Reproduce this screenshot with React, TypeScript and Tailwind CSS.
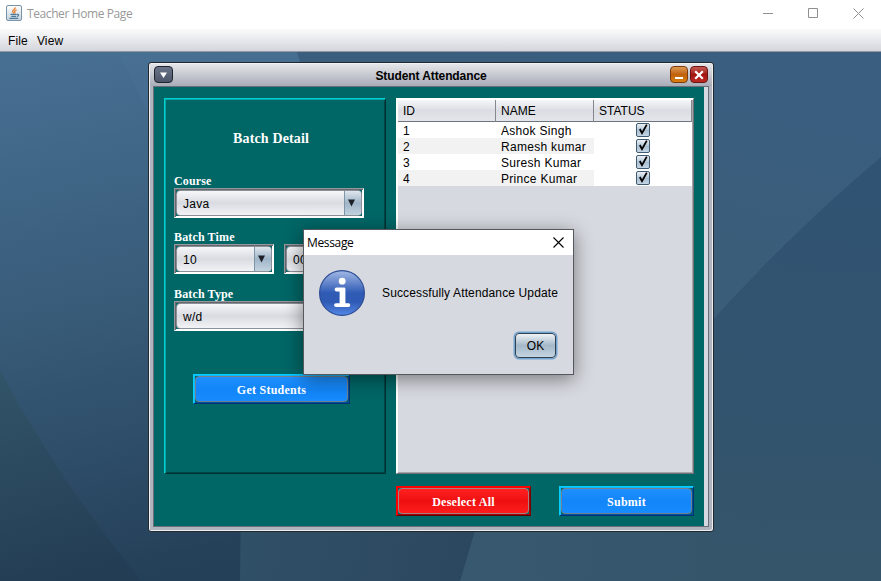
import React from 'react';
import clsx from 'clsx';

interface Student {
  id: number;
  name: string;
}

const students: Student[] = [
  { id: 1, name: 'Ashok Singh' },
  { id: 2, name: 'Ramesh kumar' },
  { id: 3, name: 'Suresh Kumar' },
  { id: 4, name: 'Prince Kumar' },
];

const JavaIcon: React.FC = () => (
  <svg width="16" height="16" viewBox="0 0 16 16" className="shrink-0">
    <defs>
      <linearGradient id="cup" x1="0" y1="0" x2="0" y2="1">
        <stop offset="0" stopColor="#ffffff" />
        <stop offset="1" stopColor="#c3d3de" />
      </linearGradient>
    </defs>
    <rect x="0.5" y="0.5" width="15" height="15" rx="1.5" fill="url(#cup)" stroke="#7893a8" />
    <path d="M9.4 2.4C9.8 4.2 6.2 4.8 6.6 6.5c.2.8 1.2 1 1 2M10.6 4.8C8.8 5.6 8.2 6.2 8.8 7c.4.6.1 1-.2 1.4" fill="none" stroke="#e8812e" strokeWidth="1.3" />
    <path d="M4.4 9.4h6.2M5.2 11.4h5M3.4 13.4h8.8M11 9.5c2.2-.6 2.2 1.4 0 1.9" fill="none" stroke="#4d7796" strokeWidth="1.1" />
  </svg>
);

const Wallpaper: React.FC = () => (
  <svg className="absolute inset-0" width="881" height="529" viewBox="0 52 881 529">
    <defs>
      <linearGradient id="left" gradientUnits="userSpaceOnUse" x1="60" y1="60" x2="170" y2="575">
        <stop offset="0" stopColor="#476f92" />
        <stop offset="0.5" stopColor="#375a77" />
        <stop offset="1" stopColor="#243f58" />
      </linearGradient>
      <linearGradient id="corner" gradientUnits="userSpaceOnUse" x1="0" y1="375" x2="60" y2="581">
        <stop offset="0" stopColor="#325468" />
        <stop offset="1" stopColor="#233d54" />
      </linearGradient>
      <linearGradient id="right" gradientUnits="userSpaceOnUse" x1="760" y1="52" x2="700" y2="320">
        <stop offset="0" stopColor="#3a5e80" />
        <stop offset="1" stopColor="#3a5d78" />
      </linearGradient>
      <linearGradient id="rightLow" gradientUnits="userSpaceOnUse" x1="800" y1="180" x2="780" y2="581">
        <stop offset="0" stopColor="#305373" />
        <stop offset="1" stopColor="#35556a" />
      </linearGradient>
      <linearGradient id="mid" gradientUnits="userSpaceOnUse" x1="240" y1="531" x2="480" y2="581">
        <stop offset="0" stopColor="#305067" />
        <stop offset="1" stopColor="#2b475f" />
      </linearGradient>
      <linearGradient id="bottom" gradientUnits="userSpaceOnUse" x1="470" y1="0" x2="720" y2="0">
        <stop offset="0" stopColor="#38586f" />
        <stop offset="1" stopColor="#35556b" />
      </linearGradient>
    </defs>
    <path d="M0 52H881V581H0Z" fill="url(#left)" />
    <path d="M118 52H300L320 120H152Z" fill="#4a7396" opacity="0.4" />
    <path d="M0 370Q58 480 142 581H0Z" fill="url(#corner)" />
    <path d="M297 52H881V400H400Z" fill="url(#right)" />
    <path d="M881 157Q785 238 700 334L460 581H881Z" fill="url(#rightLow)" />
    <path d="M241 500H484L460 581H240Z" fill="url(#mid)" />
    <path d="M484 500H712V581H460Z" fill="url(#bottom)" />
  </svg>
);

const Combo: React.FC<{ value: string; className: string }> = ({ value, className }) => (
  <div
    className={clsx(
      'h-[30px] border border-t-[#97989d] border-l-[#97989d] border-r-white border-b-white bg-[#006666] p-px shadow-[inset_1px_1px_0_#66676c,inset_-1px_-1px_0_#fff]',
      className,
    )}
  >
    <div className="flex h-[26px] overflow-hidden rounded-[4px] border border-[#8b8f98] bg-linear-to-b from-[#f6f7f9] via-[#d8dbe1] to-[#f2f3f6]">
      <span className="flex-1 pt-px pl-[6px] text-[12px] leading-[25px] tracking-[0.3px]">{value}</span>
      <span className="flex w-[17px] border-l border-[#7f95a8] bg-linear-to-b from-[#dfe6ed] via-[#9fb5c8] to-[#c3d3e0] pt-[8px] pl-[3px]">
        <svg width="7" height="8" viewBox="0 0 7 8">
          <path d="M0 0.5H7L3.5 7.5Z" fill="#1d2127" />
        </svg>
      </span>
    </div>
  </div>
);

const Field: React.FC<{ label: string; className?: string; children: React.ReactNode }> = ({ label, className, children }) => (
  <div className={className}>
    <div className="h-[14px] text-[12px] leading-[14px] font-bold tracking-[0.14px] text-white font-['Liberation_Serif',serif]">
      {label}
    </div>
    {children}
  </div>
);

const BevelButton: React.FC<{ label: string; tone: 'blue' | 'red'; className: string }> = ({ label, tone, className }) => (
  <button
    className={clsx(
      'block h-[30px] border bg-[#006666] p-px',
      tone === 'blue'
        ? 'border-t-[#00d2ff] border-l-[#00d2ff] border-r-[#00346f] border-b-[#00346f] shadow-[inset_1px_1px_0_#12b8ff,inset_-1px_-1px_0_#004f9f]'
        : 'border-t-[#ff0000] border-l-[#ff0000] border-r-[#7c0000] border-b-[#5c0000] shadow-[inset_1px_1px_0_#ff0000,inset_-1px_-1px_0_#a80000]',
      className,
    )}
  >
    <span
      className={clsx(
        "block h-[26px] rounded-[4px] border text-[12px] leading-[26px] font-bold tracking-[0.25px] text-white font-['Liberation_Serif',serif]",
        tone === 'blue'
          ? 'border-[#75808c] bg-linear-to-b from-[#1e90ff] via-[#1285f8] to-[#168cff]'
          : 'border-[#a88080] bg-linear-to-b from-[#ff2020] via-[#ee1010] to-[#ff1c1c]',
      )}
    >
      {label}
    </span>
  </button>
);

const Check: React.FC = () => (
  <svg width="14" height="15" viewBox="0 0 14 15">
    <defs>
      <linearGradient id="check" x1="0" y1="0" x2="0" y2="1">
        <stop offset="0" stopColor="#f2f5f8" />
        <stop offset="0.55" stopColor="#a9bfd1" />
        <stop offset="1" stopColor="#c8d8e6" />
      </linearGradient>
    </defs>
    <rect x="0.5" y="1.5" width="13" height="13" rx="1.5" fill="url(#check)" stroke="#3f5a73" />
    <path d="M3.8 7L6 11.2L10.8 2.6" fill="none" stroke="#000" strokeWidth="1.8" />
  </svg>
);

const StudentTable: React.FC = () => (
  <div className="h-[376px] border border-t-white border-l-white border-r-[#707277] border-b-[#707277] bg-[#d6d9df] p-px shadow-[inset_1px_1px_0_#fff,inset_-1px_-1px_0_#a2a4a9]">
    <div className="grid h-[22px] grid-cols-3 border-b border-[#6d747e] bg-linear-to-b from-[#f6f7f9] via-[#dadde3] to-[#e4e6eb] text-[12px] leading-[22px]">
      {['ID', 'NAME', 'STATUS'].map((title) => (
        <span key={title} className="border-r border-[#83888f] pl-[5px]">
          {title}
        </span>
      ))}
    </div>
    {students.map((student, i) => (
      <div key={student.id} className="grid h-4 grid-cols-3 overflow-hidden bg-white text-[12px] leading-[18px]">
        <span className={clsx('h-4 pl-[5px]', i % 2 === 1 && 'bg-[#f2f2f2]')}>{student.id}</span>
        <span className={clsx('h-4 pl-[5px] tracking-[0.3px] whitespace-nowrap', i % 2 === 1 && 'bg-[#f2f2f2]')}>
          {student.name}
        </span>
        <span className="flex h-4 items-start justify-center">
          <Check />
        </span>
      </div>
    ))}
  </div>
);

const AttendanceFrame: React.FC = () => (
  <section className="absolute top-[10px] left-[148px] h-[470px] w-[566px] rounded-[3px] border border-[#23282f] bg-[#b0b4be] px-1 shadow-[inset_1px_1px_0_#f0f1f4,inset_-1px_-1px_0_#eceef2]">
    <header className="-mx-[3px] mt-px flex h-[22px] items-start justify-between bg-linear-to-b from-[#e4e5e9] to-[#a9adb8] px-1 pt-[2px]">
      <span className="flex h-[17px] w-[19px] items-center justify-center rounded-[4px] border border-[#1e232d] bg-linear-to-b from-[#6a7388] to-[#4c556a]">
        <svg width="7" height="6" viewBox="0 0 7 6">
          <path d="M0 0.5H7L3.5 6Z" fill="#fff" />
        </svg>
      </span>
      <h1 className="pl-[19px] text-[12px] leading-[20px] font-bold tracking-[-0.1px]">Student Attendance</h1>
      <span className="flex gap-[2px]">
        <span className="flex h-[17px] w-[18px] items-end justify-center rounded-[4px] border border-[#7a3c0c] bg-linear-to-b from-[#dd9a50] via-[#c06209] to-[#da7e10] pb-[3px]">
          <span className="h-[2px] w-2 bg-white" />
        </span>
        <span className="flex h-[17px] w-[18px] items-center justify-center rounded-[4px] border border-[#6b1512] bg-linear-to-b from-[#c45a53] via-[#a31510] to-[#bd2a22]">
          <svg width="10" height="10" viewBox="0 0 10 10">
            <path d="M1.2 1.2L8.8 8.8M8.8 1.2L1.2 8.8" stroke="#fff" strokeWidth="2.2" />
          </svg>
        </span>
      </span>
    </header>

    <div className="flex h-[441px] border border-[#6a6e79] bg-[#d6d9df]">
      <div className="flex w-[550px] gap-[10px] bg-[#006666] pt-[11px] pl-[10px]">
        {/* Batch form */}
        <div className="h-[376px] w-[222px] shrink-0 border border-t-[#00d0d0] border-l-[#00d0d0] border-r-[#003131] border-b-[#003131] pl-[9px] shadow-[inset_1px_1px_0_#00a8a8,inset_-1px_-1px_0_#004747]">
          <h2 className="mt-[32px] pl-[59px] text-[14px] leading-4 font-bold tracking-[0.15px] text-white font-['Liberation_Serif',serif]">
            Batch Detail
          </h2>
          <Field label="Course" className="mt-[27px]">
            <Combo value="Java" className="w-[190px]" />
          </Field>
          <div className="mt-3 flex items-end gap-[10px]">
            <Field label="Batch Time">
              <Combo value="10" className="w-[100px]" />
            </Field>
            <Combo value="00" className="w-[80px]" />
          </div>
          <Field label="Batch Type" className="mt-[13px]">
            <Combo value="w/d" className="w-[190px]" />
          </Field>
          <BevelButton label="Get Students" tone="blue" className="mt-[43px] ml-[19px] w-[157px]" />
        </div>

        {/* Student list and actions */}
        <div className="w-[298px] shrink-0">
          <StudentTable />
          <div className="mt-3 flex justify-between">
            <BevelButton label="Deselect All" tone="red" className="w-[135px]" />
            <BevelButton label="Submit" tone="blue" className="w-[135px]" />
          </div>
        </div>
      </div>
    </div>
  </section>
);

const MessageDialog: React.FC = () => (
  <div className="absolute top-[177px] left-[303px] h-[146px] w-[271px] border border-[#55585c] bg-[#d6d9df] shadow-[0_4px_18px_rgba(0,0,0,0.45)]">
    <div className="flex h-[25px] items-center justify-between bg-white pr-[9px] pl-[3px]">
      <span className="text-[12px] leading-[25px] tracking-[-0.35px] font-['Open_Sans',sans-serif]">Message</span>
      <svg width="11" height="11" viewBox="0 0 11 11">
        <path d="M0.5 0.5L10.5 10.5M10.5 0.5L0.5 10.5" stroke="#000" strokeWidth="1.1" />
      </svg>
    </div>
    <div className="flex items-center gap-[17px] pt-[15px] pl-[15px]">
      <svg width="46" height="46" viewBox="0 0 46 46" className="shrink-0">
        <defs>
          <linearGradient id="info" x1="0" y1="0" x2="0" y2="1">
            <stop offset="0" stopColor="#a3b9e6" />
            <stop offset="0.5" stopColor="#2f5bb5" />
            <stop offset="0.7" stopColor="#2f5bb5" />
            <stop offset="1" stopColor="#5588e6" />
          </linearGradient>
        </defs>
        <circle cx="23" cy="23" r="22.4" fill="url(#info)" stroke="#2c4c94" strokeWidth="1.2" />
        <circle cx="23.2" cy="11.2" r="3.4" fill="#fff" />
        <path
          d="M17.6 17.6H25a1.4 1.4 0 0 1 1.4 1.4V33.2H29.4a1.8 1.8 0 0 1 0 3.8H17a1.8 1.8 0 0 1 0-3.8H20.6V21.6H17.6a2 2 0 0 1 0-4Z"
          fill="#fff"
        />
      </svg>
      <span className="text-[12px] leading-[18px] tracking-[0.13px] whitespace-nowrap">Successfully Attendance Update</span>
    </div>
    <button className="mt-[17px] ml-[211px] block h-[25px] w-[41px] rounded-[4px] border border-[#2e4254] bg-linear-to-b from-[#f0f3f6] via-[#a4b8c9] to-[#c4d4e2] text-[12px] leading-[24px] shadow-[0_0_0_1.5px_#73a4d1]">
      OK
    </button>
  </div>
);

const App: React.FC = () => (
  <div className="h-[581px] w-[881px] overflow-hidden bg-white text-black font-['Liberation_Sans',Arial,sans-serif]">
    <div className="flex h-[29px] items-center justify-between pr-[17px] pb-[3px] pl-[6px]">
      <div className="flex items-center gap-[5px]">
        <JavaIcon />
        <span className="pt-[2px] text-[12px] leading-4 tracking-[-0.4px] text-[#999] font-['Open_Sans',sans-serif]">
          Teacher Home Page
        </span>
      </div>
      <svg width="101" height="11" viewBox="0 0 101 11" fill="none" stroke="#8f8f8f">
        <path d="M0 5.5H10M45.5 0.5H54.5V9.5H45.5ZM90.5 0.5L100.5 10.5M100.5 0.5L90.5 10.5" />
      </svg>
    </div>

    <nav className="flex h-[23px] gap-[9px] border-b border-[#9297a1] bg-linear-to-b from-[#fbfbfc] to-[#d4d6dd] pl-2 text-[12px] leading-[24px] tracking-[0.15px]">
      <span>File</span>
      <span>View</span>
    </nav>

    <main className="relative h-[529px]">
      <Wallpaper />
      <AttendanceFrame />
      <MessageDialog />
    </main>
  </div>
);

export default App;
